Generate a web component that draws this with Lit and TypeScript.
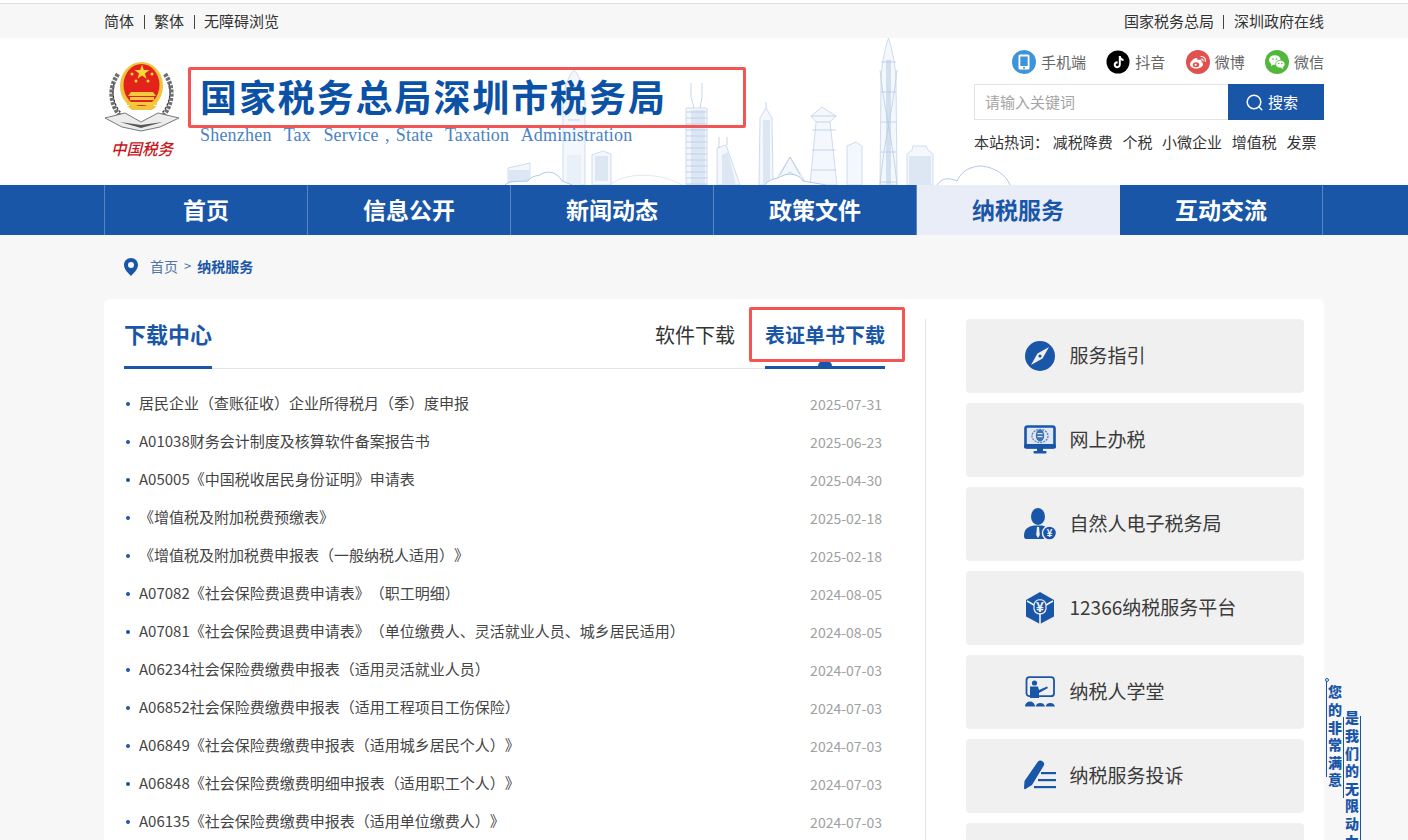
import { LitElement, html, css, svg } from "lit";
import { customElement } from "lit/decorators.js";

const rows: [string, string][] = [
  ["居民企业（查账征收）企业所得税月（季）度申报", "2025-07-31"],
  ["A01038财务会计制度及核算软件备案报告书", "2025-06-23"],
  ["A05005《中国税收居民身份证明》申请表", "2025-04-30"],
  ["《增值税及附加税费预缴表》", "2025-02-18"],
  ["《增值税及附加税费申报表（一般纳税人适用）》", "2025-02-18"],
  ["A07082《社会保险费退费申请表》（职工明细）", "2024-08-05"],
  ["A07081《社会保险费退费申请表》（单位缴费人、灵活就业人员、城乡居民适用）", "2024-08-05"],
  ["A06234社会保险费缴费申报表（适用灵活就业人员）", "2024-07-03"],
  ["A06852社会保险费缴费申报表（适用工程项目工伤保险）", "2024-07-03"],
  ["A06849《社会保险费缴费申报表（适用城乡居民个人）》", "2024-07-03"],
  ["A06848《社会保险费缴费明细申报表（适用职工个人）》", "2024-07-03"],
  ["A06135《社会保险费缴费申报表（适用单位缴费人）》", "2024-07-03"],
];

const BLUE = "#1a56a8";

const icons = {
  compass: svg`<circle cx="16" cy="16" r="15" fill="${BLUE}"/><path d="M25 7 L18.500 18.500 L7 25 L13.500 13.500 Z" fill="#f0f0f0"/><circle cx="16" cy="16" r="1.600" fill="${BLUE}"/>`,
  monitor: svg`<rect x="1.500" y="2.500" width="29" height="21" rx="2" fill="#dfe7f3" stroke="${BLUE}" stroke-width="2.600"/><rect x="0" y="20" width="32" height="4.500" rx="1.500" fill="${BLUE}"/><rect x="13" y="24" width="6" height="3.500" fill="${BLUE}"/><rect x="9.500" y="27" width="13" height="2.500" rx="1" fill="${BLUE}"/><ellipse cx="16" cy="12" rx="8" ry="6.500" fill="none" stroke="#5c87c4" stroke-width="1.400" stroke-dasharray="2 1"/><ellipse cx="16" cy="11.500" rx="4.200" ry="6" fill="#3f6fb5"/><rect x="13.500" y="9" width="5" height="1.200" fill="#dfe7f3"/><rect x="13.500" y="12" width="5" height="1.200" fill="#dfe7f3"/>`,
  person: svg`<ellipse cx="14" cy="8.500" rx="7" ry="8.500" fill="${BLUE}"/><path d="M0 28 C0 21 4 18.500 10 17.500 L18 17.500 C22 18.500 24 20 25 22 L20 31 L2 31 C0.800 31 0 30 0 28Z" fill="${BLUE}"/><path d="M13 19 L15 19 L15.800 27 L14 30 L12.200 27Z" fill="#f0f0f0"/><circle cx="25.500" cy="25" r="7" fill="${BLUE}" stroke="#f0f0f0" stroke-width="1.400"/><text x="25.500" y="28.600" font-size="10" font-weight="700" fill="#f0f0f0" text-anchor="middle" font-family="Liberation Sans, sans-serif">¥</text>`,
  cube: svg`<path d="M16 0 L30 8 L30 24.500 L16 32 L2 24.500 L2 8 Z" fill="${BLUE}"/><path d="M16 21 L16 32 M3 9 L10 13 M29 9 L22 13" stroke="#f0f0f0" stroke-width="1.600" fill="none"/><path d="M10 13 C11 6 21 6 22 13 L22 17 C21 21 19 22 16 22 C13 22 11 21 10 17Z" fill="none" stroke="#f0f0f0" stroke-width="1.200"/><text x="16" y="20" font-size="14" font-weight="700" fill="#f0f0f0" text-anchor="middle" font-family="Liberation Sans, sans-serif">¥</text>`,
  board: svg`<rect x="2.500" y="1.200" width="27.500" height="19" rx="3" fill="none" stroke="${BLUE}" stroke-width="1.800"/><circle cx="10.500" cy="7" r="2.600" fill="${BLUE}"/><path d="M6 10.500 L14 10.500 L15 14 L23 10.500 L24 12 L15 17 L15 22 L6 22Z" fill="${BLUE}"/><path d="M1 30.500 A5 5 0 0 1 11 30.500Z M11.500 30.500 A5 5 0 0 1 21 30.500Z M21.500 30.500 A5 5 0 0 1 31 30.500Z" fill="${BLUE}"/>`,
  pen: svg`<path d="M14 1.500 C15.500 0 17.500 0.500 19 1.700 C20.300 2.800 20.600 4.300 19.700 5.700 L8 25 L1.500 29 C0.600 29.500 0 29 0 28 L0.500 21 Z" fill="${BLUE}"/><rect x="17" y="12" width="15" height="2.200" fill="${BLUE}"/><rect x="14" y="19" width="18" height="2.200" fill="${BLUE}"/><rect x="10" y="26" width="22" height="2.200" fill="${BLUE}"/>`,
};

const services = [
  { t: "服务指引", i: icons.compass },
  { t: "网上办税", i: icons.monitor },
  { t: "自然人电子税务局", i: icons.person },
  { t: "12366纳税服务平台", i: icons.cube },
  { t: "纳税人学堂", i: icons.board },
  { t: "纳税服务投诉", i: icons.pen },
  { t: "", i: null },
];

const nav = ["首页", "信息公开", "新闻动态", "政策文件", "纳税服务", "互动交流"];

const hatch = (x: number, y0: number, y1: number, w: number, step: number) => {
  const out = [];
  for (let y = y0; y < y1; y += step) out.push(svg`<path d="M${x} ${y}H${x + w}"/>`);
  return out;
};

const skyline = svg`
<svg class="sky" viewBox="504 38 520 147" width="520" height="147" fill="none" stroke="#c3d4ea" stroke-width="0.800" aria-hidden="true">
  <g fill="#f4f7fc">
    <path d="M508 168 L530 163 L530 185 L508 185Z"/>
    <path d="M563 185 L563 100 C564 85 570 74 574 70 C578 74 584 85 585 100 L585 185Z"/>
    <path d="M592 155 L603 151 L611 154 L611 185 L592 185Z"/>
    <path d="M686 185 L686 108 L707 108 L707 185Z"/>
    <path d="M717 148 L726 145 L740 185 L717 185Z"/>
    <path d="M759 185 L760 118 L766 108 L772 118 L773 185Z"/>
    <path d="M773 185 L790 157 L807 185Z"/>
    <path d="M810 185 L816 122 L811 116 L822 107 L836 116 L830 122 L837 185Z"/>
    <path d="M847 146 L856 142 L862 146 L862 185 L847 185Z"/>
    <path d="M880 185 L881 80 C882 60 886 46 888.500 38 C891 46 895 60 896 80 L897 185Z"/>
    <path d="M907 154 L912 150 L913 146 L926 146 L928 150 L933 154 L933 185 L907 185Z"/>
  </g>
  <g fill="#dde7f4" stroke="none">
    <rect x="691" y="110" width="14" height="75"/>
    <rect x="886" y="60" width="5" height="125" fill="#d2dfef"/>
    <rect x="763" y="120" width="7" height="65"/>
    <rect x="567" y="155" width="14" height="30" fill="#eaf0f8"/>
    <rect x="595" y="156" width="13" height="25"/>
    <rect x="509" y="170" width="20" height="14"/>
    <rect x="909" y="156" width="22" height="29"/>
    <path d="M722 155 L728 152 L736 185 L722 185Z"/>
  </g>
  <g stroke="#b8cce6">
    ${hatch(686, 112, 185, 21, 6)}
    ${hatch(881, 62, 185, 15, 30)}
    ${hatch(812, 130, 185, 24, 20)}
    <path d="M694 108 L691 97 L691 83 M700 108 L702 97 L702 83"/>
    <path d="M766 108 L766 102 M719 148 L719 137 M727 145 L727 137"/>
    <path d="M880 70 C884 110 893 140 897 185 M897 70 C893 110 884 140 880 185"/>
    <path d="M773 185 L790 172 L807 185 M780 175 L790 157 L800 175"/>
    <path d="M816 122 L830 122 M811 116 L836 116"/>
    <path d="M568 100 L580 100 M568 120 L580 120"/>
  </g>
  <g stroke="#9dbadf" fill="#fff">
    <path d="M505 185 C510 180 520 182 528 181 C532 176 536 176 540 175 C545 171 556 170 562 181 L572 185"/>
    <path d="M610 185 C625 172 660 172 682 185" fill="none" stroke="#d5e1f0"/>
    <path d="M765 185 C770 178 775 180 782 176 C790 172 800 175 803 181 L826 185"/>
    <path d="M937 185 C942 177 950 178 957 181 C962 170 972 166 982 166 C996 168 1006 175 1010 185"/>
  </g>
</svg>`;

const emblem = svg`
<svg class="emblem" viewBox="104 60 76 102" width="76" height="102" aria-label="中国税务">
  <g fill="none" stroke="#6d6f72" stroke-width="4.500" stroke-dasharray="3 1.200">
    <path d="M118 74 C108 88 109 108 126 122"/>
    <path d="M165 74 C175 88 174 108 157 122"/>
  </g>
  <g fill="none" stroke="#2f3032" stroke-width="1.200" stroke-dasharray="2 2">
    <path d="M114 84 C111 94 114 108 126 118"/>
    <path d="M169 84 C172 94 169 108 157 118"/>
  </g>
  <ellipse cx="141.500" cy="86" rx="21.500" ry="24" fill="#f0c43c"/>
  <ellipse cx="141.500" cy="85" rx="18" ry="21" fill="#e2231a"/>
  <path d="M142 64.500 L143.800 70 L149.500 70 L144.900 73.400 L146.600 78.800 L142 75.500 L137.400 78.800 L139.100 73.400 L134.500 70 L140.200 70Z" fill="#ffd83a"/>
  <g fill="#ffd83a"><circle cx="132" cy="74" r="1.500"/><circle cx="152" cy="74" r="1.500"/><circle cx="136" cy="81" r="1.500"/><circle cx="148" cy="81" r="1.500"/></g>
  <path d="M131 92 L153 92 L156 96 L128 96Z M130 97 L154 97 L154 100 L130 100Z M127 102 L157 102 L157 105 L127 105Z" fill="#f5c93e"/>
  <path d="M127 106 L157 106 L152 110 L132 110Z" fill="#f0c43c"/>
  <path d="M105 118 L125 113 L141 122 L158 113 L179 118 L160 127 L141 131 L122 127Z" fill="#ececec" stroke="#77797c" stroke-width="1"/>
  <path d="M120 122 L141 128 L163 122 L141 125Z" fill="#55575a"/>
  <text x="111" y="155" font-size="16" font-weight="500" font-style="italic" fill="#c8161d" textLength="62" lengthAdjust="spacingAndGlyphs" font-family="Noto Sans CJK SC, sans-serif">中国税务</text>
</svg>`;

@customElement("app-root")
export class AppRoot extends LitElement {
  static styles = css`
    :host {
      display: block;
      position: relative;
      height: 840px;
      overflow: hidden;
      background: #f7f7f7;
      color: #333;
      font-family: "Noto Sans CJK SC", "Noto Sans", sans-serif;
      text-spacing-trim: space-all;
      font-feature-settings: "palt" 0;
    }
    * { box-sizing: border-box; }
    .wrap { width: 1220px; margin-left: 104px; }
    .edge { height: 4px; background: #fff; border-bottom: 1px solid #dedede; }
    .topbar { height: 34px; background: #f7f7f7; }
    .topbar .wrap { height: 34px; display: flex; justify-content: space-between; align-items: center; font-size: 15px; line-height: 32px; }
    .links { display: flex; align-items: center; gap: 9.500px; }
    .links i { width: 1px; height: 14px; background: #444; position: relative; top: 1px; }
    .head { background: #fff; height: 147px; }
    .head .wrap { position: relative; height: 147px; display: flex; align-items: flex-start; }
    .sky { position: absolute; left: 400px; top: 0; }
    .emblem { flex: none; margin-top: 22px; margin-right: 20px; position: relative; }
    .brand { position: relative; margin-top: 36px; }
    .brand h1 { margin: 0; font-size: 37px; line-height: 44px; font-weight: 700; letter-spacing: 1.900px; color: #0b52a6; white-space: nowrap; }
    .brand p { margin: 6px 0 0; font-family: "Liberation Serif", serif; font-size: 18px; line-height: 22px; letter-spacing: .2px; word-spacing: 1.500px; color: #4a82c4; white-space: pre; }
    .tools { position: relative; margin-left: auto; width: 350px; padding-top: 12px; }
    .social { display: flex; justify-content: flex-end; gap: 20.300px; height: 24px; }
    .social span { display: flex; align-items: center; gap: 5px; font-size: 15px; color: #666; line-height: 22px; }
    .social svg { width: 24px; height: 24px; display: block; }
    .search { display: flex; height: 36px; margin-top: 10px; }
    .search .input { flex: 1; border: 1px solid #e3e3e3; border-right: 0; background: #fff; font-size: 15px; color: #a5a5a5; padding-left: 10px; line-height: 33px; }
    .search .btn { width: 96px; background: #1a56a8; color: #fff; font-size: 15px; line-height: 34px; display: flex; align-items: center; padding-left: 18px; gap: 5px; }
    .hot { display: flex; gap: 9.700px; margin-top: 11px; font-size: 15px; line-height: 22px; white-space: nowrap; }
    .hot b { font-weight: 400; margin-right: -1px; width: 70px; }
    nav { background: #1a56a8; height: 50px; }
    nav .wrap { display: grid; grid-template-columns: repeat(6, 1fr); border-left: 1px solid rgba(255,255,255,.28); width: 1219px; }
    nav a { height: 50px; line-height: 49px; text-align: center; font-size: 23px; font-weight: 700; color: #fff; border-right: 1px solid rgba(255,255,255,.28); }
    nav a.on { background: #e8edf7; color: #1a56a8; border-right-color: #e8edf7; }
    .crumb { height: 64px; display: flex; align-items: center; padding-left: 20px; font-size: 14px; line-height: 18px; padding-bottom: 2px; color: #4f74ab; }
    .crumb svg { width: 14px; height: 18px; margin-right: 12px; flex: none; position: relative; top: 1px; }
    .crumb em { font-style: normal; margin: 0 6px; font-size: 13px; }
    .crumb b { color: #1a56a8; font-weight: 700; font-size: 14px; }
    .card { background: #fff; border-radius: 6px; padding: 20px; display: flex; gap: 40px; height: 600px; }
    .main { width: 802px; padding-right: 40px; border-right: 1px solid #e5e5e5; flex: none; }
    .tabs { height: 50px; display: flex; justify-content: space-between; border-bottom: 1px solid #e3e3e3; }
    .tab-title { height: 50px; font-size: 22px; font-weight: 700; line-height: 29px; color: #1a56a8; border-bottom: 3px solid #1a56a8; width: 88px; white-space: nowrap; }
    .tab-right { display: flex; gap: 30px; font-size: 20px; line-height: 32px; height: 50px; }
    .tab-right .cur { position: relative; font-weight: 700; color: #1a56a8; border-bottom: 3px solid #1a56a8; height: 50px; }
    .tab-right .cur::after { content: ""; position: absolute; left: 50%; bottom: 0; margin-left: -7px; width: 14px; height: 5px; background: #1a56a8; border-radius: 7px 7px 0 0; }
    ul { list-style: none; margin: 0; padding: 16px 0 0; }
    li { height: 38px; display: flex; align-items: center; font-size: 15px; color: #444; }
    li::before { content: ""; width: 4px; height: 4px; border-radius: 50%; background: #1a56a8; margin: 0 9px 0 2px; flex: none; }
    li span { flex: 1; white-space: nowrap; position: relative; top: -1.500px; }
    li time { font-size: 14px; color: #a0a0a0; margin-right: 3px; }
    .side { width: 338px; display: flex; flex-direction: column; gap: 10px; }
    .svc { height: 74px; flex: none; border-radius: 4px; background: #f0f0f0; display: flex; align-items: center; gap: 14px; padding-left: 58px; font-size: 19px; line-height: 26px; color: #3a3a3a; }
    .svc svg { width: 32px; height: 32px; flex: none; }
    .svc span { position: relative; top: -1px; left: -.500px; }
    .mark { position: absolute; border: 3px solid #f55454; border-radius: 2px; pointer-events: none; }
    .m1 { left: 188px; top: 67px; width: 558px; height: 61px; }
    .m2 { left: 749px; top: 307px; width: 156px; height: 55px; }
    .slogan { position: absolute; writing-mode: vertical-rl; font-size: 14px; font-weight: 900; line-height: 14px; letter-spacing: 3.600px; color: #1a56a8; white-space: nowrap; }
    .s1 { left: 1328px; top: 685px; }
    .s2 { left: 1345px; top: 711px; }
    .rule { position: absolute; width: 1px; background: #1a56a8; }
    .r1 { left: 1326px; top: 680px; height: 97px; }
    .r2 { left: 1343px; top: 717px; height: 81px; }
    .r3 { left: 1360px; top: 716px; height: 124px; }
    .ring { position: absolute; left: 1324.500px; top: 678px; width: 4px; height: 4px; border-radius: 50%; border: 1px solid #1a56a8; background: #fff; }
  `;

  render() {
    return html`
      <div class="edge"></div>
      <div class="topbar"><div class="wrap">
        <div class="links"><span>简体</span><i></i><span>繁体</span><i></i><span>无障碍浏览</span></div>
        <div class="links"><span>国家税务总局</span><i></i><span>深圳政府在线</span></div>
      </div></div>

      <header class="head"><div class="wrap">
        ${skyline}
        ${emblem}
        <div class="brand">
          <h1>国家税务总局深圳市税务局</h1>
          <p>Shenzhen  Tax  Service , State  Taxation  Administration</p>
        </div>
        <div class="tools">
          <div class="social">
            <span><svg viewBox="0 0 24 24"><circle cx="12" cy="12" r="12" fill="#3f94d8"/><rect x="6.500" y="4.500" width="11" height="15" rx="1.500" fill="#fff"/><rect x="8.300" y="6.500" width="7.400" height="9.500" fill="#3f94d8"/><rect x="11" y="17" width="2" height="1.500" fill="#3f94d8"/></svg>手机端</span>
            <span><svg viewBox="0 0 24 24"><circle cx="12" cy="12" r="11.500" fill="#000"/><path d="M12.800 6 L14.800 6 C15 7.700 16 8.700 17.500 8.900 L17.500 10.900 C16.400 10.900 15.500 10.500 14.800 10 L14.800 14.600 C14.800 16.800 13.200 18.200 11.200 18.200 C9.200 18.200 7.700 16.700 7.700 14.800 C7.700 12.700 9.500 11.100 11.600 11.400 L11.600 13.500 C10.600 13.200 9.800 13.900 9.800 14.800 C9.800 15.600 10.400 16.200 11.200 16.200 C12.100 16.200 12.800 15.600 12.800 14.600Z" fill="#fff"/></svg>抖音</span>
            <span><svg viewBox="0 0 24 24"><circle cx="12" cy="12" r="12" fill="#e0524f"/><path d="M10 18.500 C6.500 18.500 4 16.800 4 14.500 C4 12 7.500 8.500 10 8 C11.500 7.800 11.800 9 11.400 10.200 C13.500 9.500 15.500 9.600 15.600 11 C15.600 11.500 15.500 11.800 15.300 12.200 C16.500 12.500 17 13.200 17 14.200 C17 16.500 14 18.500 10 18.500Z" fill="#fff"/><ellipse cx="10" cy="14.700" rx="3.300" ry="2.500" fill="#e0524f"/><circle cx="9.600" cy="14.800" r="1.100" fill="#fff"/><path d="M15 6.500 C18 6.200 20 8.700 19.300 11.500 M15.300 9 C16.500 8.800 17.300 9.800 17 11" fill="none" stroke="#fff" stroke-width="1.100" stroke-linecap="round"/></svg>微博</span>
            <span><svg viewBox="0 0 24 24"><circle cx="12" cy="12" r="12" fill="#52b73a"/><ellipse cx="9.800" cy="10" rx="5.800" ry="4.800" fill="#fff"/><path d="M6.500 13 L6 16 L9 14.500Z" fill="#fff"/><ellipse cx="15.300" cy="14.200" rx="4.700" ry="3.900" fill="#fff" stroke="#52b73a" stroke-width=".8"/><path d="M17.500 17 L18.500 19 L15.500 17.800Z" fill="#fff"/><circle cx="8" cy="9" r=".8" fill="#52b73a"/><circle cx="11.500" cy="9" r=".8" fill="#52b73a"/><circle cx="13.800" cy="13.500" r=".7" fill="#52b73a"/><circle cx="16.800" cy="13.500" r=".7" fill="#52b73a"/></svg>微信</span>
          </div>
          <div class="search">
            <div class="input">请输入关键词</div>
            <div class="btn"><svg width="17" height="17" viewBox="0 0 17 17" fill="none" stroke="#fff" stroke-width="1.500"><circle cx="8" cy="8" r="6.800"/><path d="M12.800 12.800 L15.800 15.800" stroke-linecap="round"/></svg>搜索</div>
          </div>
          <div class="hot"><b>本站热词：</b><span>减税降费</span><span>个税</span><span>小微企业</span><span>增值税</span><span>发票</span></div>
        </div>
      </div></header>

      <nav><div class="wrap">
        ${nav.map((n) => html`<a class=${n === "纳税服务" ? "on" : ""}>${n}</a>`)}
      </div></nav>

      <div class="wrap">
        <div class="crumb">
          <svg viewBox="0 0 14 18"><path fill-rule="evenodd" d="M7 0 C3 0 0 3 0 7 C0 11 4 15 7 18 C10 15 14 11 14 7 C14 3 11 0 7 0Z M7 4 A3 3 0 1 1 7 10 A3 3 0 1 1 7 4Z" fill="${BLUE}"/></svg>
          首页<em>&gt;</em><b>纳税服务</b>
        </div>
        <section class="card">
          <div class="main">
            <div class="tabs">
              <div class="tab-title">下载中心</div>
              <div class="tab-right"><span>软件下载</span><span class="cur">表证单书下载</span></div>
            </div>
            <ul>${rows.map(([t, d]) => html`<li><span>${t}</span><time>${d}</time></li>`)}</ul>
          </div>
          <aside class="side">
            ${services.map((s) => html`<div class="svc">${s.i ? html`<svg viewBox="0 0 32 32">${s.i}</svg>` : ""}<span>${s.t}</span></div>`)}
          </aside>
        </section>
      </div>

      <div class="mark m1"></div>
      <div class="mark m2"></div>
      <div class="rule r1"></div><div class="ring"></div>
      <div class="rule r2"></div><div class="rule r3"></div>
      <div class="slogan s1">您的非常满意</div>
      <div class="slogan s2">是我们的无限动力</div>
    `;
  }
}
